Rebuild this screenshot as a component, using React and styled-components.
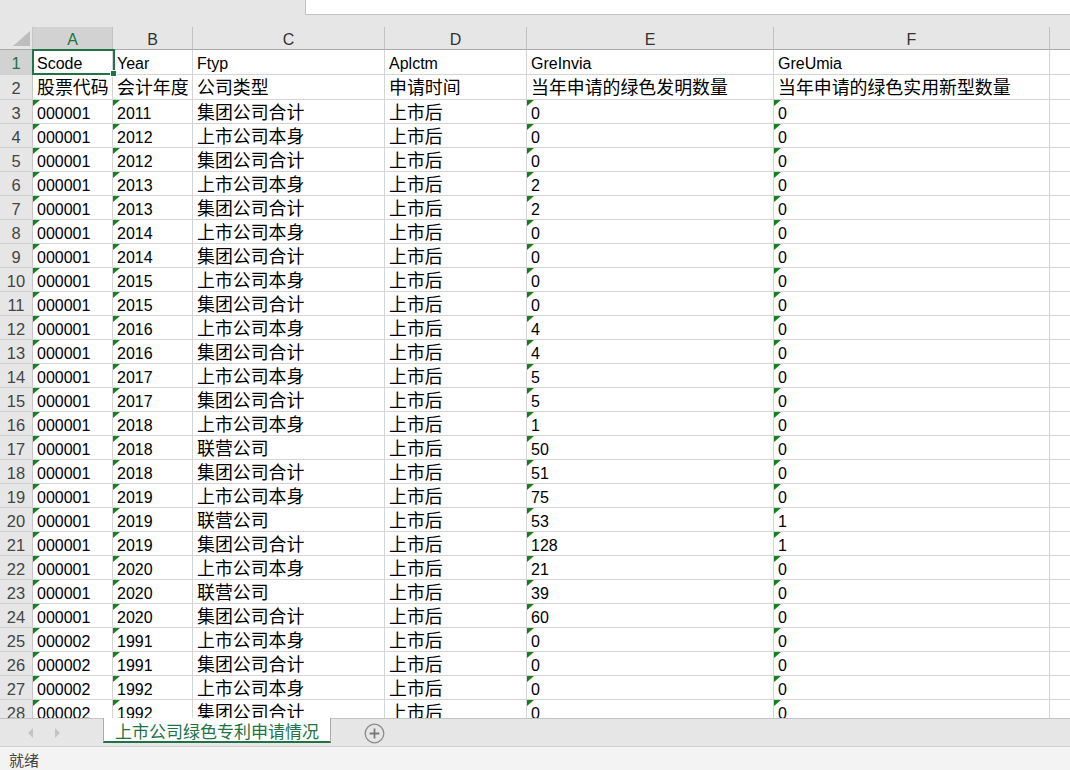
import React from 'react';
import styled, { createGlobalStyle } from 'styled-components';

const GlobalStyle = createGlobalStyle`
  html, body { margin: 0; padding: 0; background: #ffffff; }
  body { font-family: "Liberation Sans", "Noto Sans CJK SC", sans-serif; }
  * { box-sizing: border-box; }
`;

const TEMPLATE = '33px 80px 80px 192px 142px 247px 276px 60px';
const GREEN = '#217346';
const GRID = '#d4d4d4';

const Window = styled.div`
  width: 1070px;
  height: 770px;
  display: flex;
  flex-direction: column;
  overflow: hidden;
  background: #e6e6e6;
`;

const TopStrip = styled.div`
  height: 27px;
  flex: none;
  display: flex;
  justify-content: flex-end;
  align-items: flex-start;
  background: #e6e6e6;
`;

const FormulaBox = styled.div`
  width: 765px;
  height: 15px;
  background: #ffffff;
  border-left: 1px solid #c3c3c3;
  border-bottom: 1px solid #c3c3c3;
`;

const Sheet = styled.div`
  flex: 1;
  overflow: hidden;
  background: #ffffff;
  display: flex;
  flex-direction: column;
`;

const GridRow = styled.div`
  display: grid;
  grid-template-columns: ${TEMPLATE};
  height: ${(p) => p.$h}px;
  flex: none;
`;

const Corner = styled.div`
  background: #e6e6e6;
  border-right: 1px solid #c6c6c6;
  border-bottom: 1px solid #ababab;
  display: flex;
  align-items: flex-end;
  justify-content: flex-end;
  padding: 0 2px 3px 0;
`;

const ColHead = styled.div`
  background: ${(p) => (p.$sel ? '#d2d2d2' : '#e6e6e6')};
  color: ${(p) => (p.$sel ? GREEN : '#333333')};
  border-right: 1px solid #c0c0c0;
  border-bottom: 1px solid #ababab;
  font-size: 16px;
  display: flex;
  align-items: center;
  justify-content: center;
  padding-top: 3px;
`;

const RowHead = styled.div`
  background: ${(p) => (p.$sel ? '#d2d2d2' : '#e6e6e6')};
  color: ${(p) => (p.$sel ? GREEN : '#444444')};
  border-right: 1px solid #c6c6c6;
  border-bottom: 1px solid #d0d0d0;
  font-size: 16.5px;
  line-height: 19px;
  text-align: center;
  padding-top: 4px;
`;

const Cell = styled.div`
  position: relative;
  border-right: 1px solid ${GRID};
  border-bottom: 1px solid ${GRID};
  color: #000000;
  font-size: ${(p) => (p.$cjk ? '17.9px' : '16px')};
  line-height: 19px;
  padding: 4px 0 0 4px;
  white-space: nowrap;

  &::before {
    content: '';
    display: ${(p) => (p.$flag ? 'block' : 'none')};
    position: absolute;
    top: 0;
    left: 0;
    width: 0;
    height: 0;
    border-top: 6px solid #18801a;
    border-right: 7px solid transparent;
  }
`;

const Selection = styled.div`
  position: absolute;
  left: -1px;
  top: -1px;
  width: 83px;
  height: 26px;
  border: 2px solid ${GREEN};
  z-index: 2;
  pointer-events: none;
`;

const Handle = styled.div`
  position: absolute;
  right: -4px;
  bottom: -4px;
  width: 7px;
  height: 7px;
  background: ${GREEN};
  border: 1px solid #ffffff;
`;

const TabBar = styled.div`
  height: 29px;
  flex: none;
  display: flex;
  align-items: stretch;
  background: #e6e6e6;
  border-top: 1px solid #c3c3c3;
  border-bottom: 1px solid #d0d0d0;
`;

const NavArea = styled.div`
  width: 103px;
  display: flex;
  align-items: center;
  padding-left: 27px;
  gap: 20px;
`;

const Tab = styled.div`
  width: 228px;
  margin-top: -1px;
  margin-bottom: 3px;
  background: #ffffff;
  border-left: 1px solid #ababab;
  border-right: 1px solid #ababab;
  border-bottom: 2px solid ${GREEN};
  color: ${GREEN};
  font-size: 17px;
  display: flex;
  align-items: center;
  justify-content: center;
  padding-top: 1px;
  white-space: nowrap;
`;

const AddButton = styled.div`
  margin-left: 33px;
  display: flex;
  align-items: center;
  padding-top: 1px;
`;

const StatusBar = styled.div`
  height: 23px;
  flex: none;
  background: #f3f3f3;
  color: #444444;
  font-size: 15px;
  padding-left: 9px;
  display: flex;
  align-items: center;
  padding-top: 1px;
`;

const LETTERS = ['A', 'B', 'C', 'D', 'E', 'F', ''];

const ROWS = [
  ['Scode', 'Year', 'Ftyp', 'Aplctm', 'GreInvia', 'GreUmia'],
  ['股票代码', '会计年度', '公司类型', '申请时间', '当年申请的绿色发明数量', '当年申请的绿色实用新型数量'],
  ['000001', '2011', '集团公司合计', '上市后', '0', '0'],
  ['000001', '2012', '上市公司本身', '上市后', '0', '0'],
  ['000001', '2012', '集团公司合计', '上市后', '0', '0'],
  ['000001', '2013', '上市公司本身', '上市后', '2', '0'],
  ['000001', '2013', '集团公司合计', '上市后', '2', '0'],
  ['000001', '2014', '上市公司本身', '上市后', '0', '0'],
  ['000001', '2014', '集团公司合计', '上市后', '0', '0'],
  ['000001', '2015', '上市公司本身', '上市后', '0', '0'],
  ['000001', '2015', '集团公司合计', '上市后', '0', '0'],
  ['000001', '2016', '上市公司本身', '上市后', '4', '0'],
  ['000001', '2016', '集团公司合计', '上市后', '4', '0'],
  ['000001', '2017', '上市公司本身', '上市后', '5', '0'],
  ['000001', '2017', '集团公司合计', '上市后', '5', '0'],
  ['000001', '2018', '上市公司本身', '上市后', '1', '0'],
  ['000001', '2018', '联营公司', '上市后', '50', '0'],
  ['000001', '2018', '集团公司合计', '上市后', '51', '0'],
  ['000001', '2019', '上市公司本身', '上市后', '75', '0'],
  ['000001', '2019', '联营公司', '上市后', '53', '1'],
  ['000001', '2019', '集团公司合计', '上市后', '128', '1'],
  ['000001', '2020', '上市公司本身', '上市后', '21', '0'],
  ['000001', '2020', '联营公司', '上市后', '39', '0'],
  ['000001', '2020', '集团公司合计', '上市后', '60', '0'],
  ['000002', '1991', '上市公司本身', '上市后', '0', '0'],
  ['000002', '1991', '集团公司合计', '上市后', '0', '0'],
  ['000002', '1992', '上市公司本身', '上市后', '0', '0'],
  ['000002', '1992', '集团公司合计', '上市后', '0', '0'],
];

const FLAG_COLS = [0, 1, 4, 5];
const isCjk = (s) => /[\u4e00-\u9fff]/.test(s);

function CornerMark() {
  return (
    <svg width="17" height="15" viewBox="0 0 17 15">
      <polygon points="17,0 17,15 0,15" fill="#bdbdbd" />
    </svg>
  );
}

function Arrow({ dir }) {
  return (
    <svg width="7" height="10" viewBox="0 0 7 10">
      {dir === 'left' ? (
        <polygon points="6,0 6,10 1,5" fill="#c3c3c3" />
      ) : (
        <polygon points="1,0 1,10 6,5" fill="#c3c3c3" />
      )}
    </svg>
  );
}

function PlusCircle() {
  return (
    <svg width="21" height="21" viewBox="0 0 21 21">
      <circle cx="10.5" cy="10.5" r="9.3" fill="none" stroke="#8c8c8c" strokeWidth="1.3" />
      <path d="M10.5 5.6 V15.4 M5.6 10.5 H15.4" stroke="#7a7a7a" strokeWidth="1.8" />
    </svg>
  );
}

export default function App() {
  return (
    <>
      <GlobalStyle />
      <Window>
        <TopStrip>
          <FormulaBox />
        </TopStrip>
        <Sheet>
          <GridRow $h={23}>
            <Corner>
              <CornerMark />
            </Corner>
            {LETTERS.map((l, i) => (
              <ColHead key={i} $sel={i === 0}>
                {l}
              </ColHead>
            ))}
          </GridRow>
          {ROWS.map((row, ri) => (
            <GridRow key={ri} $h={ri < 2 ? 25 : 24}>
              <RowHead $sel={ri === 0}>{ri + 1}</RowHead>
              {row.map((v, ci) => (
                <Cell key={ci} $cjk={isCjk(v)} $flag={ri >= 2 && FLAG_COLS.includes(ci)}>
                  {v}
                  {ri === 0 && ci === 0 && (
                    <Selection>
                      <Handle />
                    </Selection>
                  )}
                </Cell>
              ))}
              <Cell />
            </GridRow>
          ))}
        </Sheet>
        <TabBar>
          <NavArea>
            <Arrow dir="left" />
            <Arrow dir="right" />
          </NavArea>
          <Tab>上市公司绿色专利申请情况</Tab>
          <AddButton>
            <PlusCircle />
          </AddButton>
        </TabBar>
        <StatusBar>就绪</StatusBar>
      </Window>
    </>
  );
}
